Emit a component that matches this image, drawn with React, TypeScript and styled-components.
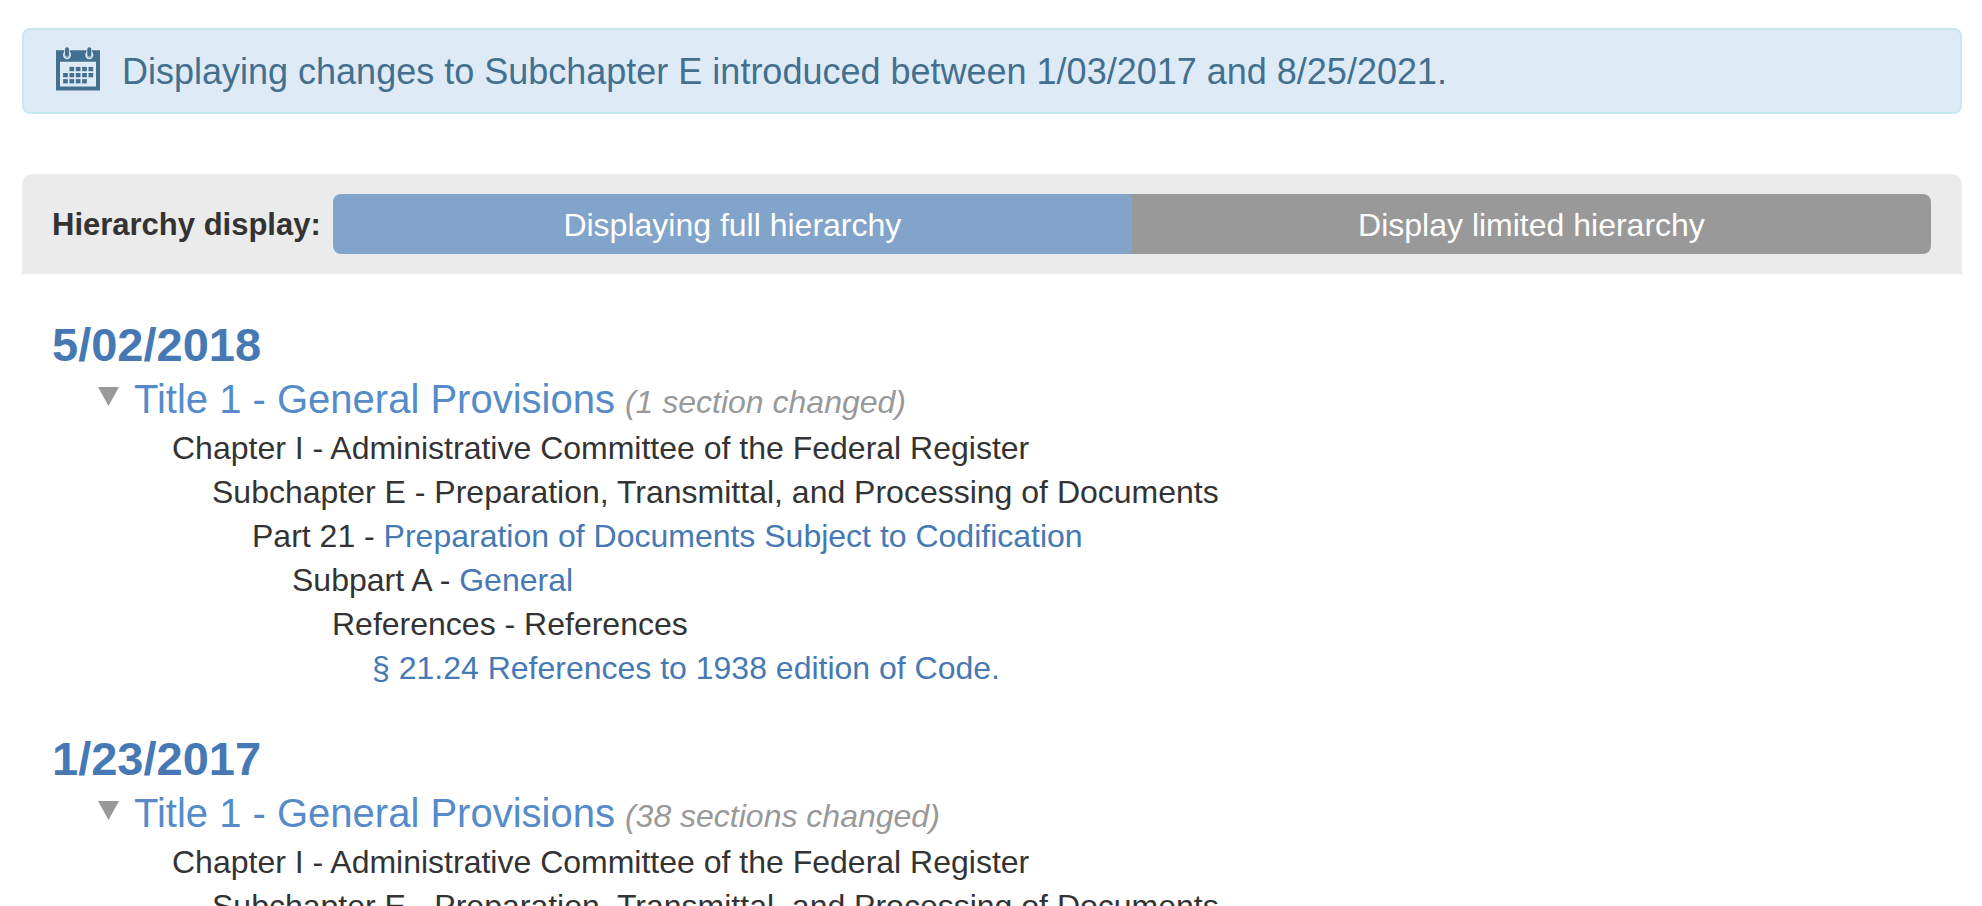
import React, { useState } from "react";
import styled, { createGlobalStyle } from "styled-components";

const GlobalStyle = createGlobalStyle`
  *, *::before, *::after { box-sizing: border-box; }
  body {
    margin: 0;
    background: #fff;
    color: #333;
    font-family: "Helvetica Neue", Helvetica, "Liberation Sans", Arial, sans-serif;
    font-size: 32px;
    line-height: 44px;
  }
`;

const Page = styled.main`
  padding: 28px 20px 0 22px;
  height: 100vh;
  overflow: hidden;
`;

const Banner = styled.div`
  display: flex;
  align-items: flex-start;
  gap: 22px;
  padding: 17px 32px 18px;
  border: 2px solid #c5e8f1;
  border-radius: 8px;
  background: #deebf7;
  color: #43708f;
`;

const BannerText = styled.p`
  margin: 0;
  padding-top: 3px;
  font-size: 36px;
`;

const CalendarSvg = styled.svg`
  flex: none;
  width: 44px;
  height: 44px;
`;

const Toolbar = styled.div`
  display: flex;
  align-items: center;
  gap: 12px;
  margin-top: 60px;
  padding: 20px 31px 20px 30px;
  border-radius: 10px 10px 0 0;
  background: #ebebeb;
`;

const ToolbarLabel = styled.span`
  padding-top: 2px;
  font-size: 31px;
  font-weight: 700;
`;

const ButtonGroup = styled.div`
  display: flex;
  flex: 1;
  overflow: hidden;
  border-radius: 8px;
`;

const ToggleButton = styled.button<{ $active: boolean }>`
  flex: 1 1 0;
  padding: 9px 24px 7px;
  border: 0;
  background: ${(p) => (p.$active ? "#82a3ca" : "#999")};
  color: #fff;
  font: inherit;
  cursor: pointer;
`;

const ChangeList = styled.div`
  display: flex;
  flex-direction: column;
  gap: 41px;
  padding: 43px 30px 0;
`;

const DateHeading = styled.h2`
  margin: 0;
  color: #4679b4;
  font-size: 47px;
  font-weight: 700;
  line-height: 56px;
`;

const TitleRow = styled.div`
  display: flex;
  align-items: baseline;
  padding: 0 0 1px 46px;
  line-height: 52px;
`;

const Disclosure = styled.button`
  align-self: flex-start;
  display: flex;
  margin: 14px 15px 0 0;
  padding: 0;
  border: 0;
  background: none;
  cursor: pointer;
`;

const TitleLink = styled.a`
  color: #558bc9;
  font-size: 40px;
  text-decoration: none;
`;

const ChangeCount = styled.em`
  margin-left: 10px;
  color: #999;
  line-height: 44px;
`;

const Level = styled.ul`
  margin: 0;
  padding: 0 0 0 40px;
  list-style: none;
`;

const RootLevel = styled(Level)`
  padding-left: 120px;
`;

const EntryLink = styled.a`
  color: #4679b4;
  text-decoration: none;
`;

type Entry = { label: string; link?: string };
type Change = { date: string; count: string; entries: Entry[] };

const hierarchy: Entry[] = [
  { label: "Chapter I - Administrative Committee of the Federal Register" },
  { label: "Subchapter E - Preparation, Transmittal, and Processing of Documents" },
  { label: "Part 21 - ", link: "Preparation of Documents Subject to Codification" },
  { label: "Subpart A - ", link: "General" },
];

const changes: Change[] = [
  {
    date: "5/02/2018",
    count: "(1 section changed)",
    entries: [
      ...hierarchy,
      { label: "References - References" },
      { label: "", link: "§ 21.24 References to 1938 edition of Code." },
    ],
  },
  { date: "1/23/2017", count: "(38 sections changed)", entries: hierarchy.slice(0, 2) },
];

const cells = [
  [1, 2, 3, 4],
  [0, 1, 2, 3, 4],
  [0, 1, 2, 3],
];

function CalendarIcon() {
  return (
    <CalendarSvg viewBox="0 0 44 44" aria-hidden="true">
      <path
        fill="currentColor"
        fillRule="evenodd"
        d="M0 3.3H44V43.6H0ZM4 14.8V39.6H40V14.8Z"
      />
      {[11, 33.3].map((x) => (
        <g key={x} fill="none" strokeLinecap="round">
          <path
            stroke="#deebf7"
            strokeWidth="1.6"
            d={`M${x - 2} 5.2Q${x - 3.2} 6.2 ${x - 3.2} 8a3.2 3.4 0 0 0 6.4 0Q${x + 3.2} 6.2 ${x + 2} 5.2`}
          />
          <path stroke="#deebf7" strokeWidth="5.4" d={`M${x} 3V7.4`} />
          <path stroke="currentColor" strokeWidth="4" d={`M${x} 2.2V7.7`} />
        </g>
      ))}
      {cells.map((row, r) =>
        row.map((c) => (
          <rect
            key={`${r}-${c}`}
            x={7.1 + c * 6.35}
            y={19.9 + r * 6.1}
            width="4.7"
            height="4.3"
            fill="currentColor"
          />
        ))
      )}
    </CalendarSvg>
  );
}

function Entries({ entries, root = false }: { entries: Entry[]; root?: boolean }) {
  const [first, ...rest] = entries;
  const List = root ? RootLevel : Level;
  return (
    <List>
      <li>
        {first.label}
        {first.link && <EntryLink href="#">{first.link}</EntryLink>}
        {rest.length > 0 && <Entries entries={rest} />}
      </li>
    </List>
  );
}

function ChangeGroup({ change }: { change: Change }) {
  const [open, setOpen] = useState(true);
  return (
    <section>
      <DateHeading>{change.date}</DateHeading>
      <TitleRow>
        <Disclosure
          type="button"
          aria-label="Toggle Title 1"
          aria-expanded={open}
          onClick={() => setOpen(!open)}
        >
          <svg width="21" height="19" viewBox="0 0 21 19" aria-hidden="true">
            <path fill="#999" d={open ? "M0 0H21L10.5 19Z" : "M1 0L20 9.5L1 19Z"} />
          </svg>
        </Disclosure>
        <TitleLink href="#">Title 1 - General Provisions</TitleLink>
        <ChangeCount>{change.count}</ChangeCount>
      </TitleRow>
      {open && <Entries entries={change.entries} root />}
    </section>
  );
}

export default function App() {
  const [full, setFull] = useState(true);
  return (
    <>
      <GlobalStyle />
      <Page>
        <Banner>
          <CalendarIcon />
          <BannerText>
            Displaying changes to Subchapter E introduced between 1/03/2017 and 8/25/2021.
          </BannerText>
        </Banner>
        <Toolbar>
          <ToolbarLabel id="hierarchy-label">Hierarchy display:</ToolbarLabel>
          <ButtonGroup role="group" aria-labelledby="hierarchy-label">
            <ToggleButton type="button" $active={full} onClick={() => setFull(true)}>
              Displaying full hierarchy
            </ToggleButton>
            <ToggleButton type="button" $active={!full} onClick={() => setFull(false)}>
              Display limited hierarchy
            </ToggleButton>
          </ButtonGroup>
        </Toolbar>
        <ChangeList>
          {changes.map((change) => (
            <ChangeGroup key={change.date} change={change} />
          ))}
        </ChangeList>
      </Page>
    </>
  );
}
